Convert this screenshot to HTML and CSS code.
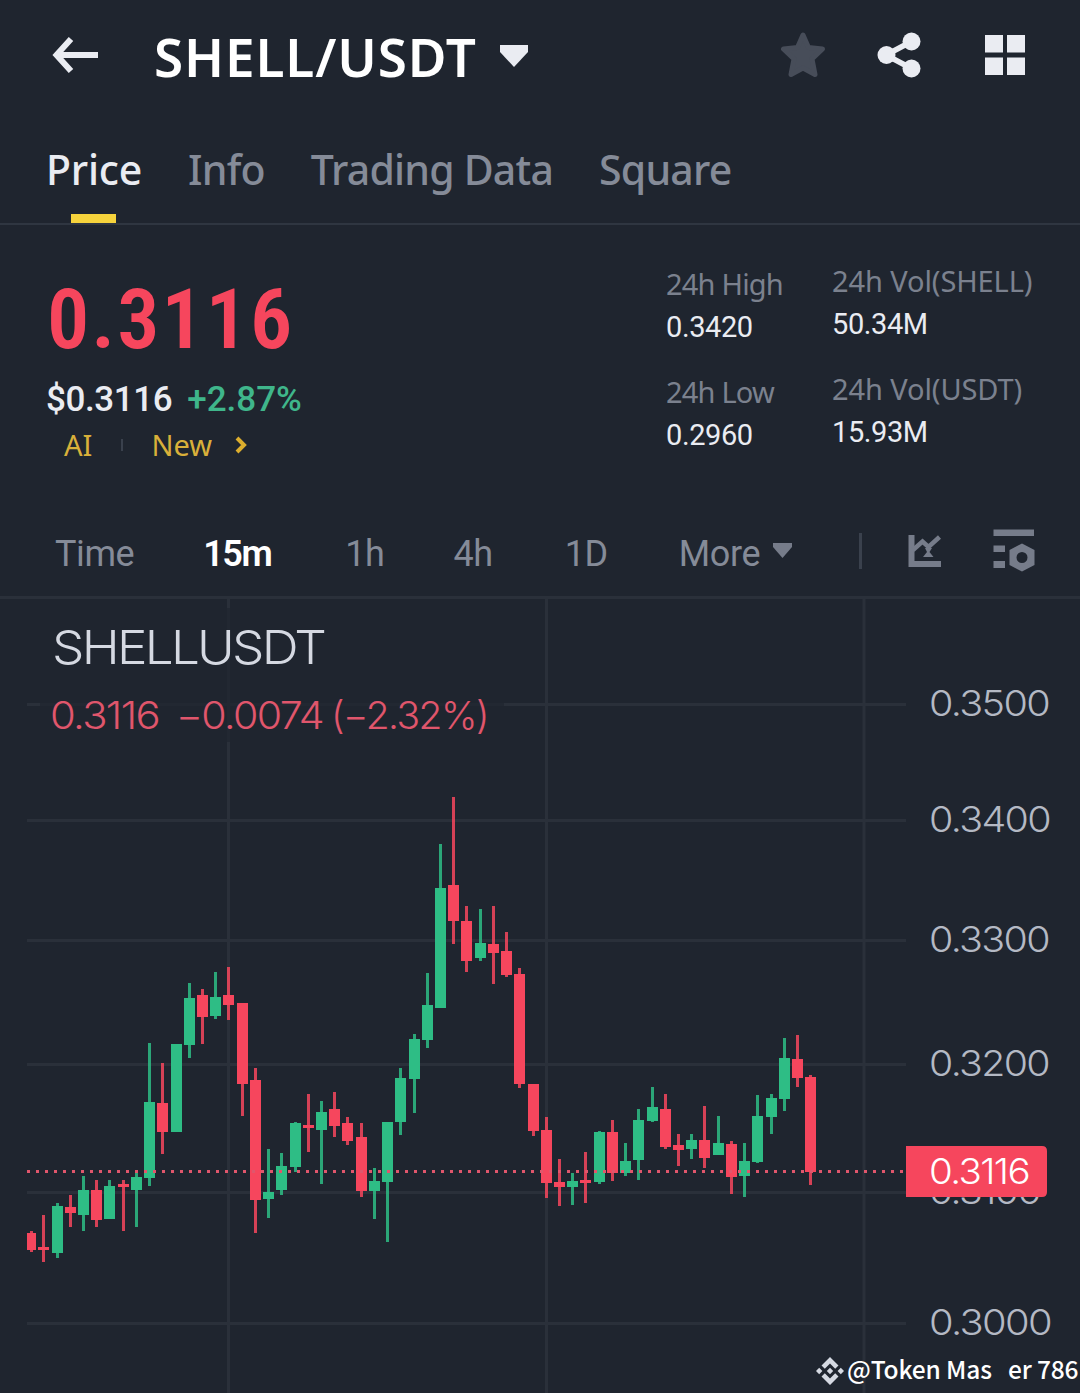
FILE: index.html
```html
<!DOCTYPE html>
<html lang="en">
<head>
    <meta charset="UTF-8">
    <meta name="viewport" content="width=device-width, initial-scale=1.0">
    <title>SHELL/USDT</title>
    <link rel="stylesheet" href="styles.css">
</head>
<body>

    <!-- Header -->
    <div class="header">
        <svg class="back" width="48" height="40" viewBox="0 0 48 40">
            <path d="M47 20H6M20 4L5.500 20L20 36" fill="none" stroke="#eaecf2" stroke-width="6"/>
        </svg>
        <h1>SHELL/USDT</h1>
        <svg class="caret" width="28" height="22" viewBox="0 0 28 22">
            <path d="M0 0H28V7L14 22L0 7Z" fill="#eaecf2"/>
        </svg>
        <div class="actions">
            <svg width="46" height="48" viewBox="0 0 46 48">
                <path d="M23 4L28.500 16.500L42.500 18L32 28L35 43.500L23 37L11 43.500L14 28L3.500 18L17.500 16.500Z" fill="#474d59" stroke="#474d59" stroke-width="5" stroke-linejoin="round"/>
            </svg>
            <svg width="44" height="46" viewBox="0 0 44 46">
                <path d="M34.500 9.500L9 23L34.500 36.500" fill="none" stroke="#eaecf2" stroke-width="5.500"/>
                <circle cx="34.500" cy="9.500" r="9" fill="#eaecf2"/>
                <circle cx="9.500" cy="23" r="9" fill="#eaecf2"/>
                <circle cx="34.500" cy="36.500" r="9" fill="#eaecf2"/>
            </svg>
            <svg width="40" height="40" viewBox="0 0 40 40">
                <path d="M0 0H18V17.500H0ZM22 0H40V17.500H22ZM0 22.500H18V40H0ZM22 22.500H40V40H22Z" fill="#eaecf2"/>
            </svg>
        </div>
    </div>

    <!-- Tabs -->
    <div class="tabs">
        <a class="tab active">Price</a>
        <a class="tab">Info</a>
        <a class="tab">Trading Data</a>
        <a class="tab">Square</a>
    </div>

    <!-- Ticker -->
    <div class="ticker">
        <div class="price-box">
            <div class="price">0.3116</div>
            <div class="sub-price">
                <span class="usd">$0.3116</span>
                <span class="change">+2.87%</span>
            </div>
            <div class="tags">
                <span>AI</span>
                <i class="tag-line"></i>
                <span>New</span>
                <svg width="12" height="18" viewBox="0 0 12 18">
                    <path d="M2 2L9 9L2 16" fill="none" stroke="#dcae2e" stroke-width="4"/>
                </svg>
            </div>
        </div>
        <div class="stats">
            <div class="stat-col">
                <div class="label">24h High</div>
                <div class="value">0.3420</div>
                <div class="label">24h Low</div>
                <div class="value">0.2960</div>
            </div>
            <div class="stat-col vol">
                <div class="label">24h Vol(SHELL)</div>
                <div class="value">50.34M</div>
                <div class="label">24h Vol(USDT)</div>
                <div class="value">15.93M</div>
            </div>
        </div>
    </div>

    <!-- Intervals -->
    <div class="intervals">
        <span>Time</span>
        <span class="active">15m</span>
        <span>1h</span>
        <span>4h</span>
        <span class="day">1D</span>
        <span class="more">More</span>
        <svg class="more-caret" width="19" height="15" viewBox="0 0 19 15">
            <path d="M0 0H19V4L9.500 15L0 4Z" fill="#767c8a"/>
        </svg>
        <i class="divider"></i>
        <svg class="chart-icon" width="34" height="34" viewBox="0 0 34 34">
            <path d="M0.500 1H6.500V27H33V33H0.500Z" fill="#767c8a"/>
            <path d="M5 16L14.500 7.500L20.500 13L31.500 3" fill="none" stroke="#767c8a" stroke-width="4.500"/>
            <path d="M17 14H24L21.500 18L25.500 23H15L19 18Z" fill="#767c8a"/>
        </svg>
        <svg class="settings-icon" width="42" height="43" viewBox="0 0 42 43">
            <path d="M0.500 0.500H41V7H0.500ZM0.500 16.500H12V23H0.500ZM0.500 32H12V39H0.500Z" fill="#767c8a"/>
            <path fill-rule="evenodd" d="M29 14.500L41.500 21V36L29 42.500L16.500 36V21ZM29 23A5.500 5.500 0 1 0 29 34A5.500 5.500 0 1 0 29 23Z" fill="#767c8a"/>
        </svg>
    </div>

    <!-- Chart -->
    <div class="chart">
        <svg width="1080" height="797" viewBox="0 596 1080 797">
            <g class="grid">
                <path d="M0 597.500H1080M27 704.500H906M27 820.500H906M27 940.500H906M27 1064.500H906M27 1192.500H906M27 1323.500H906"/>
                <path d="M228.500 597V1393M546.500 597V1393M864 597V1393"/>
            </g>
            <rect class="legend-bg" x="40" y="608" width="464" height="134"/>
            <g id="candles"></g>
            <path class="last-line" d="M27 1171.500H905"/>

            <text class="symbol" x="52" y="664" textLength="272" lengthAdjust="spacingAndGlyphs">SHELLUSDT</text>
            <text class="delta" x="50" y="729" textLength="109" lengthAdjust="spacingAndGlyphs">0.3116</text>
            <text class="delta" x="176" y="729" textLength="147" lengthAdjust="spacingAndGlyphs">−0.0074</text>
            <text class="delta" x="331" y="729" textLength="157" lengthAdjust="spacingAndGlyphs">(−2.32%)</text>

            <g class="axis">
                <text x="929" y="716" textLength="120" lengthAdjust="spacingAndGlyphs">0.3500</text>
                <text x="929" y="832" textLength="121" lengthAdjust="spacingAndGlyphs">0.3400</text>
                <text x="929" y="952" textLength="120" lengthAdjust="spacingAndGlyphs">0.3300</text>
                <text x="929" y="1076" textLength="120" lengthAdjust="spacingAndGlyphs">0.3200</text>
                <text x="929" y="1204" textLength="111" lengthAdjust="spacingAndGlyphs">0.3100</text>
                <text x="929" y="1335" textLength="122" lengthAdjust="spacingAndGlyphs">0.3000</text>
            </g>
            <path class="last-tag" d="M906 1146H1042Q1047 1146 1047 1151V1192Q1047 1197 1042 1197H906Z"/>
            <text class="last-text" x="929" y="1184" textLength="100" lengthAdjust="spacingAndGlyphs">0.3116</text>
        </svg>
        <div class="watermark">
            <svg width="28" height="28" viewBox="0 0 28 28">
                <path d="M14 0L22.500 8.500L19.200 11.800L14 6.600L8.800 11.800L5.500 8.500ZM14 28L22.500 19.500L19.200 16.200L14 21.400L8.800 16.200L5.500 19.500ZM14 10.800L17.200 14L14 17.200L10.800 14ZM3.200 10.800L6.400 14L3.200 17.200L0 14ZM24.800 10.800L28 14L24.800 17.200L21.600 14Z" fill="#d5d9e2"/>
            </svg>
            <span class="author">@Token Mas</span>
            <span class="author-end">er 786</span>
        </div>
    </div>

    <script src="chart.js"></script>
</body>
</html>
```

FILE: styles.css
```css
/* General Styles */
* {
    box-sizing: border-box;
}

body {
    margin: 0;
    width: 1080px;
    height: 1393px;
    overflow: hidden;
    background-color: #1f252f;
    color: #eaecf2;
    font-family: "Noto Sans", "Open Sans", sans-serif;
}

svg {
    display: block;
    flex: none;
}

span, a {
    white-space: nowrap;
}

/* Header */
.header {
    height: 110px;
    padding-left: 51px;
    padding-right: 55px;
    display: flex;
    align-items: center;
}

.header h1 {
    margin: 3px 0 0 55px;
    font-size: 53px;
    line-height: 60px;
    font-weight: 650;
    letter-spacing: 0.9px;
    color: #fff;
    width: 346px;
    white-space: nowrap;
}

.header .caret {
    margin-top: 1px;
}

.actions {
    margin-left: auto;
    display: flex;
    align-items: center;
    gap: 54px;
}

.actions svg:nth-child(2) {
    margin-right: 10px;
    margin-left: -3px;
}

/* Tabs */
.tabs {
    height: 115px;
    padding-left: 46px;
    display: flex;
    gap: 46px;
    border-bottom: 2px solid #2f3641;
}

.tab {
    position: relative;
    height: 113px;
    font-size: 41px;
    line-height: 118px;
    font-weight: 500;
    letter-spacing: -0.8px;
    color: #858b98;
}

.tab.active {
    letter-spacing: -0.2px;
    color: #eaecf2;
}

.tab.active::after {
    content: "";
    position: absolute;
    left: 25px;
    bottom: 0;
    width: 45px;
    height: 9px;
    background-color: #f6d33c;
}

/* Ticker */
.ticker {
    height: 275px;
    display: flex;
    justify-content: space-between;
}

.price-box {
    padding: 45px 0 0 46px;
}

.price {
    margin-left: 1px;
    font-family: Roboto, sans-serif;
    font-stretch: 75%;
    font-size: 84px;
    line-height: 100px;
    font-weight: 650;
    letter-spacing: 2px;
    color: #f6465d;
}

.sub-price {
    display: flex;
    gap: 15px;
    font-family: Roboto, sans-serif;
    font-size: 35px;
    line-height: 60px;
    font-weight: 500;
    letter-spacing: -0.4px;
}

.change {
    letter-spacing: 0;
    color: #3fb68b;
}

.tags {
    margin: -3px 0 0 18px;
    display: flex;
    align-items: center;
    font-size: 29px;
    line-height: 36px;
    color: #d9b03a;
}

.tag-line {
    width: 2px;
    height: 12px;
    margin: 0 28px 0 29px;
    background-color: #3a414d;
}

.tags svg {
    margin-left: 23px;
}

.stats {
    width: 414px;
    padding-top: 38px;
    display: flex;
}

.stat-col {
    width: 166px;
    padding-top: 3px;
}

.stat-col.vol {
    padding-top: 0;
}

.label {
    font-size: 29px;
    line-height: 36px;
    letter-spacing: -0.8px;
    color: #7b818e;
    white-space: nowrap;
}

.vol .label {
    letter-spacing: -0.1px;
}

.value {
    position: relative;
    top: 1px;
    margin-bottom: 24px;
    font-family: Roboto, sans-serif;
    font-size: 29px;
    line-height: 48px;
    letter-spacing: -0.4px;
}

/* Intervals */
.intervals {
    height: 96px;
    padding: 5px 0 0 55px;
    display: flex;
    align-items: center;
    gap: 69px;
    font-family: Roboto, sans-serif;
    font-size: 36px;
    line-height: 90px;
    letter-spacing: -0.4px;
    color: #858b98;
}

.intervals span {
    padding-top: 6px;
}

.intervals .active {
    margin-right: 5px;
    font-weight: 600;
    letter-spacing: -1.5px;
    color: #fff;
}

.day {
    margin: 0 2px 0 3px;
}

.more-caret {
    margin-left: -56px;
}

.divider {
    flex: none;
    width: 3px;
    height: 36px;
    margin-left: -2px;
    background-color: #3a414d;
}

.chart-icon {
    margin-left: -23px;
}

.settings-icon {
    margin-left: -18px;
}

/* Chart */
.chart {
    position: relative;
    height: 797px;
}

.grid path {
    fill: none;
    stroke: #2a303a;
    stroke-width: 3;
}

.legend-bg {
    fill: #1f252f;
    opacity: 0.7;
}

.up {
    fill: #2ebd85;
}

.down {
    fill: #f6465d;
}

.wick {
    opacity: 0.85;
}

.last-line {
    fill: none;
    stroke: #e0566c;
    stroke-width: 3;
    stroke-dasharray: 3 6;
}

.chart text {
    font-family: Inter, "Liberation Sans", sans-serif;
    font-weight: 300;
    letter-spacing: -1.5px;
}

.chart .symbol {
    font-size: 47px;
    letter-spacing: -2.5px;
    fill: #d5d9e2;
}

.delta {
    font-size: 38.5px;
    fill: #e0566c;
}

.axis text {
    font-size: 36px;
    fill: #b4b9c4;
}

.last-tag {
    fill: #f6465d;
}

.chart .last-text {
    font-size: 36px;
    fill: #fff;
}

/* Watermark */
.watermark {
    position: absolute;
    left: 816px;
    bottom: 7px;
    display: flex;
    align-items: center;
    font-family: "Noto Sans CJK SC", sans-serif;
    font-size: 24.5px;
    line-height: 34px;
    font-weight: 500;
    color: #fff;
}

.author {
    margin-left: 3px;
    width: 161px;
}

.watermark span {
    margin-top: -3px;
    letter-spacing: -0.15px;
}
```

FILE: chart.js
```js
// x, wick top, wick bottom, body top, body bottom, up
const candles = [
    [31.5, 1231, 1252, 1233, 1250, 0],
    [43.5, 1215, 1262, 1247, 1250, 0],
    [57.5, 1203, 1258, 1206, 1253, 1],
    [70.5, 1195, 1227, 1207, 1213, 0],
    [83.5, 1176, 1231, 1190, 1215, 1],
    [96.5, 1180, 1227, 1190, 1220, 0],
    [109.5, 1180, 1219, 1186, 1219, 1],
    [123.5, 1180, 1231, 1184, 1187, 0],
    [136.5, 1173, 1227, 1177, 1190, 1],
    [149.5, 1043, 1186, 1102, 1178, 1],
    [162.5, 1063, 1154, 1103, 1132, 0],
    [176.5, 1044, 1132, 1044, 1132, 1],
    [189.5, 983, 1058, 998, 1045, 1],
    [202.5, 989, 1044, 995, 1017, 0],
    [215.5, 972, 1019, 997, 1016, 1],
    [228.5, 967, 1020, 995, 1005, 0],
    [242.5, 1003, 1116, 1003, 1084, 0],
    [255.5, 1068, 1233, 1080, 1200, 0],
    [268.5, 1149, 1218, 1192, 1199, 1],
    [281.5, 1153, 1195, 1166, 1190, 1],
    [295.5, 1122, 1172, 1123, 1167, 1],
    [308.5, 1094, 1152, 1125, 1128, 0],
    [321.5, 1101, 1184, 1112, 1130, 1],
    [334.5, 1092, 1137, 1109, 1126, 0],
    [347.5, 1117, 1145, 1123, 1141, 0],
    [361.5, 1123, 1197, 1137, 1191, 0],
    [374.5, 1168, 1219, 1181, 1191, 1],
    [387.5, 1122, 1242, 1122, 1182, 1],
    [400.5, 1068, 1135, 1078, 1122, 1],
    [414.5, 1034, 1113, 1039, 1079, 1],
    [427.5, 973, 1048, 1005, 1040, 1],
    [440.5, 844, 1008, 888, 1008, 1],
    [453.5, 797, 944, 885, 921, 0],
    [466.5, 906, 972, 921, 961, 0],
    [480.5, 909, 961, 943, 958, 1],
    [493.5, 906, 984, 944, 953, 0],
    [506.5, 932, 977, 951, 975, 0],
    [519.5, 968, 1088, 974, 1084, 0],
    [533.5, 1084, 1136, 1084, 1131, 0],
    [546.5, 1117, 1198, 1130, 1183, 0],
    [559.5, 1159, 1206, 1182, 1187, 0],
    [572.5, 1173, 1205, 1181, 1187, 1],
    [585.5, 1152, 1203, 1180, 1183, 0],
    [599.5, 1131, 1184, 1132, 1182, 1],
    [612.5, 1120, 1181, 1132, 1173, 0],
    [625.5, 1143, 1176, 1161, 1173, 1],
    [638.5, 1109, 1180, 1120, 1160, 1],
    [652.5, 1087, 1122, 1107, 1121, 1],
    [665.5, 1094, 1149, 1109, 1147, 0],
    [678.5, 1134, 1166, 1145, 1150, 0],
    [691.5, 1134, 1159, 1140, 1149, 1],
    [704.5, 1106, 1168, 1140, 1158, 0],
    [718.5, 1116, 1155, 1143, 1155, 1],
    [731.5, 1141, 1194, 1144, 1177, 0],
    [744.5, 1143, 1197, 1161, 1176, 1],
    [757.5, 1095, 1163, 1116, 1162, 1],
    [771.5, 1094, 1134, 1098, 1117, 1],
    [784.5, 1038, 1111, 1058, 1099, 1],
    [797.5, 1035, 1087, 1059, 1078, 0],
    [810.5, 1075, 1185, 1077, 1172, 0]
];

function addRect(x, y, w, h, cls) {
    const rect = document.createElementNS("http://www.w3.org/2000/svg", "rect");
    rect.setAttribute("x", x);
    rect.setAttribute("y", y);
    rect.setAttribute("width", w);
    rect.setAttribute("height", h);
    rect.setAttribute("class", cls);
    document.getElementById("candles").appendChild(rect);
}

candles.forEach(([x, high, low, top, bottom, up], i) => {
    const cls = up ? "up" : "down";
    const w = i === 0 ? 9 : 11;
    addRect(x - 1.5, high, 3, low - high, cls + " wick");
    addRect(x - w / 2, top, w, bottom - top, cls);
});
```
